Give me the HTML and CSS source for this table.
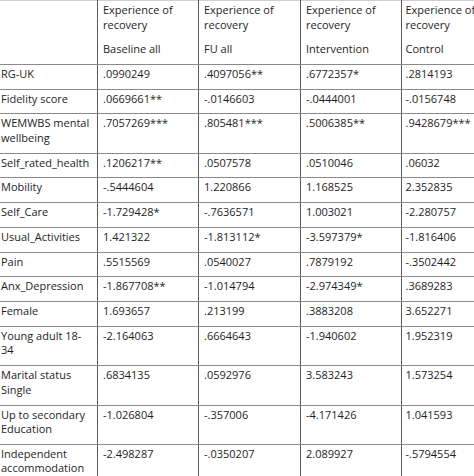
FILE: index.html
```html
<!DOCTYPE html>
<html>
<head>
<meta charset="utf-8">
<link rel="stylesheet" href="styles.css">
</head>
<body>
<table class="results">
  <colgroup>
    <col class="c-label">
    <col class="c-a">
    <col class="c-b">
    <col class="c-c">
    <col class="c-d">
  </colgroup>
  <thead>
    <tr>
      <th></th>
      <th><p>Experience of recovery</p><p class="sub">Baseline all</p></th>
      <th><p>Experience of recovery</p><p class="sub">FU all</p></th>
      <th><p>Experience of recovery</p><p class="sub">Intervention</p></th>
      <th><p>Experience of recovery</p><p class="sub">Control</p></th>
    </tr>
  </thead>
  <tbody>
    <tr><td>RG-UK</td><td>.0990249</td><td>.4097056**</td><td>.6772357*</td><td>.2814193</td></tr>
    <tr><td>Fidelity score</td><td>.0669661**</td><td>-.0146603</td><td>-.0444001</td><td>-.0156748</td></tr>
    <tr><td>WEMWBS mental wellbeing</td><td>.7057269***</td><td>.805481***</td><td>.5006385**</td><td>.9428679***</td></tr>
    <tr><td>Self_rated_health</td><td>.1206217**</td><td>.0507578</td><td>.0510046</td><td>.06032</td></tr>
    <tr><td>Mobility</td><td>-.5444604</td><td>1.220866</td><td>1.168525</td><td>2.352835</td></tr>
    <tr><td>Self_Care</td><td>-1.729428*</td><td>-.7636571</td><td>1.003021</td><td>-2.280757</td></tr>
    <tr><td>Usual_Activities</td><td>1.421322</td><td>-1.813112*</td><td>-3.597379*</td><td>-1.816406</td></tr>
    <tr><td>Pain</td><td>.5515569</td><td>.0540027</td><td>.7879192</td><td>-.3502442</td></tr>
    <tr><td>Anx_Depression</td><td>-1.867708**</td><td>-1.014794</td><td>-2.974349*</td><td>.3689283</td></tr>
    <tr><td>Female</td><td>1.693657</td><td>.213199</td><td>.3883208</td><td>3.652271</td></tr>
    <tr><td>Young adult 18-34</td><td>-2.164063</td><td>.6664643</td><td>-1.940602</td><td>1.952319</td></tr>
    <tr><td>Marital status Single</td><td>.6834135</td><td>.0592976</td><td>3.583243</td><td>1.573254</td></tr>
    <tr><td>Up to secondary Education</td><td>-1.026804</td><td>-.357006</td><td>-4.171426</td><td>1.041593</td></tr>
    <tr><td>Independent accommodation</td><td>-2.498287</td><td>-.0350207</td><td>2.089927</td><td>-.5794554</td></tr>
  </tbody>
</table>
</body>
</html>
```
FILE: styles.css
```css
html, body {
  margin: 0;
  padding: 0;
  background: #ffffff;
  overflow: hidden;
}

body {
  width: 474px;
  height: 476px;
}

.results {
  border-collapse: collapse;
  table-layout: fixed;
  width: 511px;
  font-family: "Open Sans", "Liberation Sans", Arial, sans-serif;
  font-size: 11px;
  line-height: 14.6px;
  color: #1e1e1e;
}

.c-label { width: 97px; }
.c-a { width: 101px; }
.c-b { width: 102px; }
.c-c { width: 101px; }
.c-d { width: 110px; }

.results th,
.results td {
  text-align: left;
  vertical-align: top;
  font-weight: normal;
  padding: 2px 4px 7.15px 5.5px;
  border-top: 1px solid #8a8a8a;
  border-bottom: 1px solid #8a8a8a;
  border-left: 1px solid #5a5a5a;
  border-right: 1px solid #5a5a5a;
}

.results th:first-child,
.results td:first-child {
  border-left: none;
  padding-left: 1px;
  padding-right: 5px;
}

.results th:last-child,
.results td:last-child {
  padding-left: 4px;
}

.results thead th {
  border-top: 1px solid #cfcfcf;
  padding-top: 2px;
}

.results p {
  margin: 0;
}

.results p.sub {
  margin-top: 10px;
}
```
